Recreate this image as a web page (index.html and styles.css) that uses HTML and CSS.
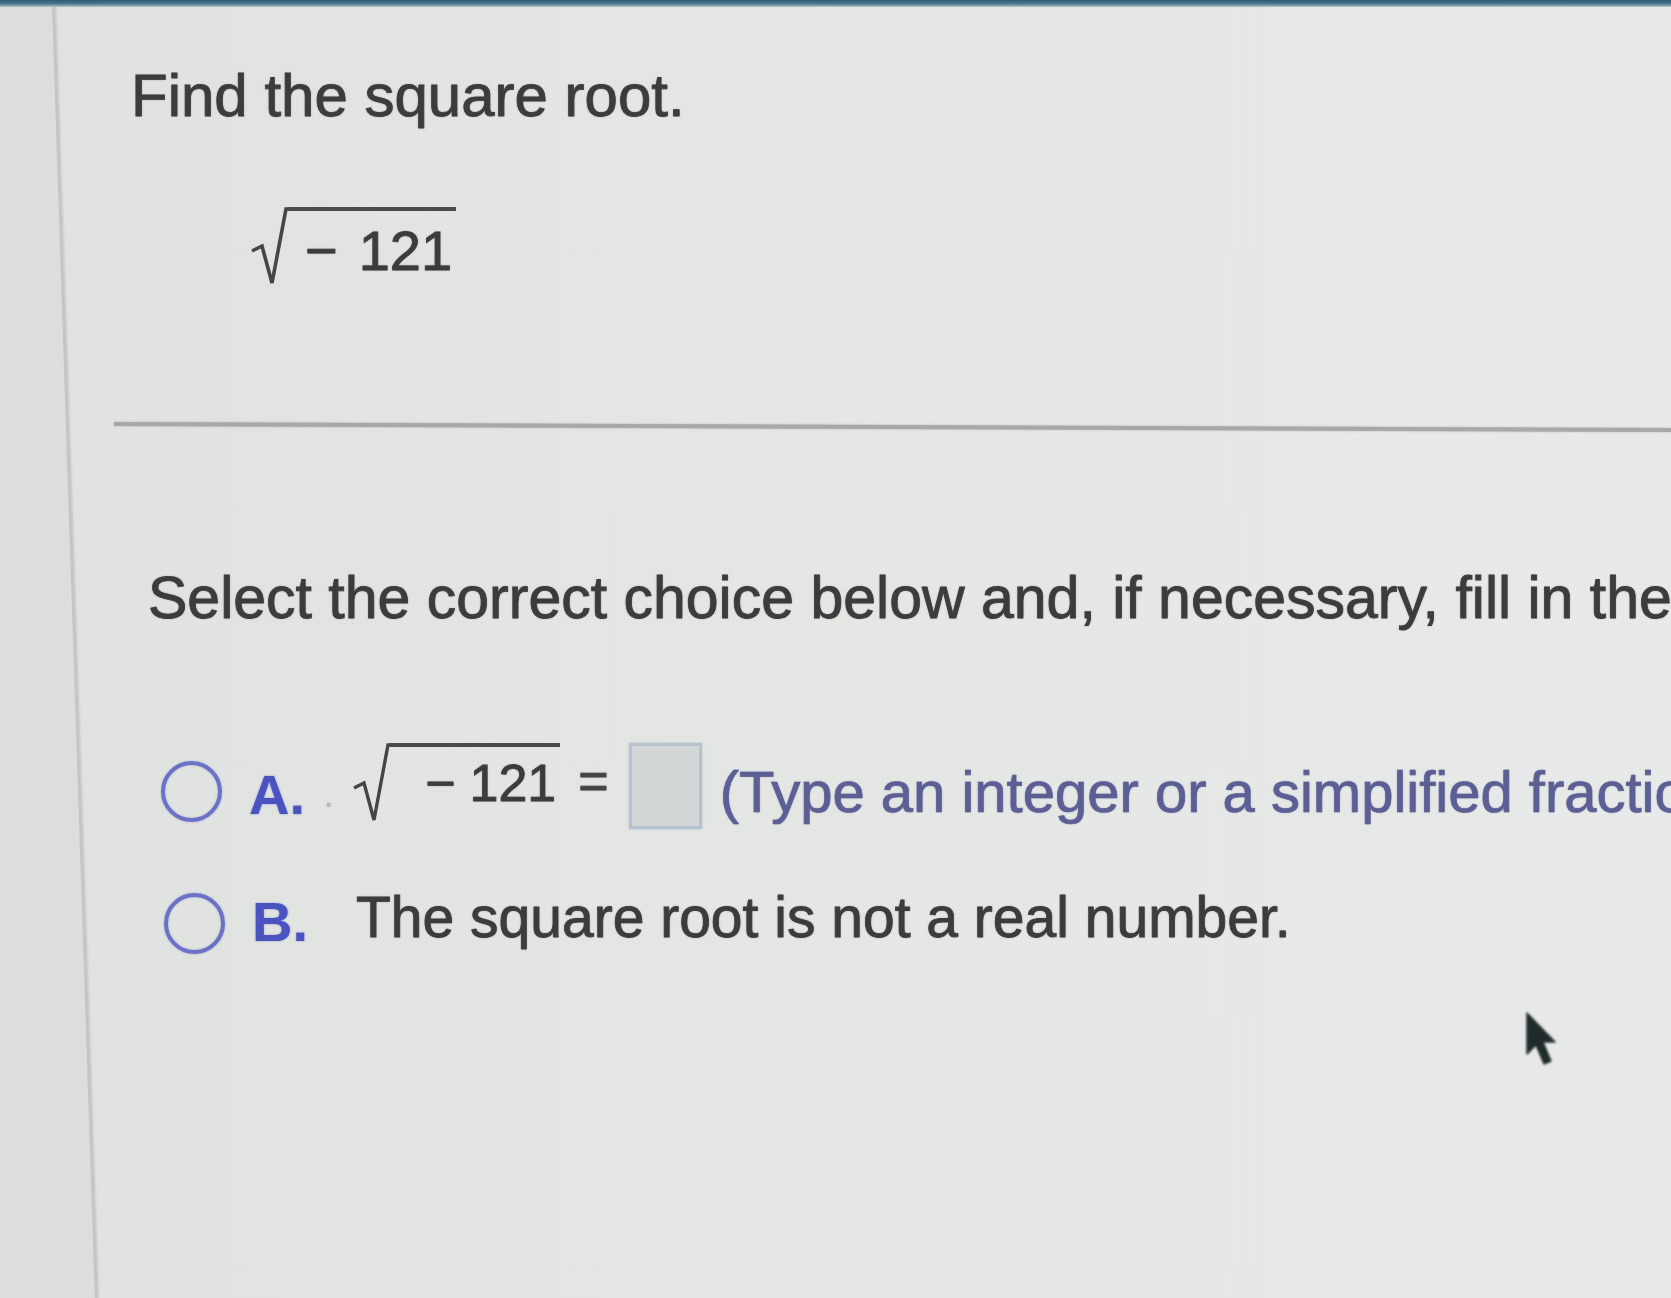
FILE: index.html
```html
<!DOCTYPE html>
<html lang="en">
<head>
<meta charset="utf-8">
<title>Find the square root</title>
<link rel="stylesheet" href="styles.css">
</head>
<body>
<div class="topbar"></div>
<div class="frame">
  <aside class="gutter"></aside>
  <main class="content">
    <h1 class="title">Find the square root.</h1>
    <div class="expr">
      <span class="sqrt sqrt-lg">
        <svg class="radical" viewBox="0 0 38 78" width="38" height="78" aria-hidden="true">
          <path d="M2 44 L12 39 L22 76 L36 2 L38 2" fill="none" stroke="#454545" stroke-width="3.6" stroke-linejoin="miter" stroke-linecap="butt"/>
        </svg>
        <span class="radicand"><span class="minus">−</span>121</span>
      </span>
    </div>
    <div class="rule"></div>
    <p class="prompt">Select the correct choice below and, if necessary, fill in the answer box to complete your choice.</p>
    <div class="options">
      <div class="opt opt-a">
        <span class="radio"></span>
        <span class="letter">A.</span>
        <span class="stray">.</span>
        <span class="sqrt sqrt-sm">
          <svg class="radical" viewBox="0 0 38 79" width="38" height="79" aria-hidden="true">
            <path d="M2 45 L12 40 L22 77 L36 2 L38 2" fill="none" stroke="#454545" stroke-width="3.4"/>
          </svg>
          <span class="radicand"><span class="minus">−</span>121</span>
        </span>
        <span class="eq">=</span>
        <span class="answer-box"></span>
        <span class="hint">(Type an integer or a simplified fraction.)</span>
      </div>
      <div class="opt opt-b">
        <span class="radio"></span>
        <span class="letter">B.</span>
        <span class="choice-text">The square root is not a real number.</span>
      </div>
    </div>
  </main>
</div>
<svg class="cursor" viewBox="0 0 34 60" width="34" height="60" aria-hidden="true">
  <path d="M3 3 L3 44 L12 35 L20 54 L27 51 L19 32 L31 32 Z" fill="#1f2b2b" stroke="#2a3434" stroke-width="1.5" stroke-linejoin="round"/>
</svg>
</body>
</html>
```

FILE: styles.css
```css
html, body {
  margin: 0;
  padding: 0;
}

body {
  width: 1671px;
  height: 1298px;
  overflow: hidden;
  position: relative;
  background: linear-gradient(90deg, #dfe2df 0%, #e3e6e3 40%, #e7eae8 100%);
  font-family: "Liberation Sans", Arial, sans-serif;
  color: #3a3a3a;
}

.topbar {
  height: 7px;
  background: linear-gradient(180deg, #2b5a72 0%, #4c7a90 55%, #b6c4c8 100%);
}

.frame {
  display: flex;
  height: 1291px;
}

.gutter {
  flex: 0 0 auto;
  width: 102px;
  margin-left: -50px;
  background: #dbdedb;
  border-right: 3px solid #c3c6c3;
  box-shadow: 1px 0 2px rgba(150, 150, 150, 0.35);
  transform: skewX(1.9deg);
  transform-origin: top left;
}

.content {
  flex: 1 1 auto;
  min-width: 0;
  overflow: hidden;
  white-space: nowrap;
}

.title {
  margin: 54px 0 0 76px;
  font-size: 60px;
  line-height: 70px;
  font-weight: normal;
  color: #3c3c3c;
  -webkit-text-stroke: 0.8px #3c3c3c;
  text-shadow: 0 0 2px rgba(60, 60, 60, 0.55);
}

.expr {
  margin: 76px 0 0 195px;
  height: 78px;
}

.sqrt {
  display: inline-flex;
  align-items: flex-start;
}

.radical {
  display: block;
  flex: 0 0 auto;
  filter: blur(0.5px);
}

.radicand {
  display: block;
  border-top: 4px solid #4a4a4a;
  color: #3c3c3c;
  -webkit-text-stroke: 0.8px #3c3c3c;
  text-shadow: 0 0 2px rgba(60, 60, 60, 0.55);
}

.sqrt-lg .radicand {
  font-size: 56px;
  line-height: 56px;
  padding: 12px 4px 6px 17px;
}

.sqrt-sm .radicand {
  font-size: 52px;
  line-height: 52px;
  padding: 10px 4px 13px 35px;
}

.sqrt-lg .minus {
  margin-right: 21px;
}

.sqrt-sm .minus {
  margin-right: 14px;
}

.rule {
  margin: 137px 0 0 59px;
  height: 4px;
  background: #a7a9a7;
  box-shadow: 0 0 2px rgba(140, 140, 140, 0.6);
  transform: rotate(0.22deg);
  transform-origin: left center;
}

.prompt {
  margin: 137px 0 0 93px;
  font-size: 59px;
  line-height: 70px;
  color: #3c3c3c;
  -webkit-text-stroke: 0.8px #3c3c3c;
  text-shadow: 0 0 2px rgba(60, 60, 60, 0.55);
}

.options {
  margin-top: 107px;
}

.opt {
  display: flex;
  align-items: flex-start;
}

.radio {
  flex: 0 0 auto;
  box-sizing: border-box;
  width: 61px;
  height: 61px;
  border: 4.5px solid #6b72c6;
  border-radius: 50%;
  box-shadow: 0 0 2px rgba(100, 108, 200, 0.6), inset 0 0 2px rgba(100, 108, 200, 0.5);
}

.letter {
  font-size: 56px;
  line-height: 70px;
  font-weight: bold;
  color: #4a53bf;
  text-shadow: 0 0 2px rgba(70, 80, 190, 0.6);
}

.opt-a .radio {
  margin: 21px 0 0 106px;
}

.opt-a .letter {
  margin: 20px 0 0 27px;
}

.stray {
  margin: 18px 0 0 18px;
  font-size: 40px;
  line-height: 70px;
  color: #b9bbb9;
}

.opt-a .sqrt {
  margin: 3px 0 0 18px;
}

.eq {
  margin: 6px 0 0 18px;
  font-size: 52px;
  line-height: 70px;
  color: #444;
  -webkit-text-stroke: 0.8px #444;
  text-shadow: 0 0 2px rgba(60, 60, 60, 0.55);
}

.answer-box {
  flex: 0 0 auto;
  box-sizing: border-box;
  width: 73px;
  height: 86px;
  margin: 3px 0 0 20px;
  border: 3px solid #b7c2cf;
  background: #d3d7d8;
  box-shadow: 0 0 2px rgba(150, 165, 185, 0.6);
}

.hint {
  margin: 17px 0 0 18px;
  font-size: 58px;
  line-height: 70px;
  color: #5c5f93;
  -webkit-text-stroke: 0.7px #5c5f93;
  text-shadow: 0 0 2px rgba(90, 95, 150, 0.6);
}

.opt-b {
  margin-top: 51px;
}

.opt-b .radio {
  margin: 12px 0 0 109px;
}

.opt-b .letter {
  margin: 6px 0 0 27px;
}

.choice-text {
  margin: 1px 0 0 48px;
  font-size: 57px;
  line-height: 70px;
  color: #3c3c3c;
  -webkit-text-stroke: 0.8px #3c3c3c;
  text-shadow: 0 0 2px rgba(60, 60, 60, 0.55);
}

.cursor {
  position: absolute;
  left: 1524px;
  top: 1010px;
  filter: blur(1.2px);
}
```
